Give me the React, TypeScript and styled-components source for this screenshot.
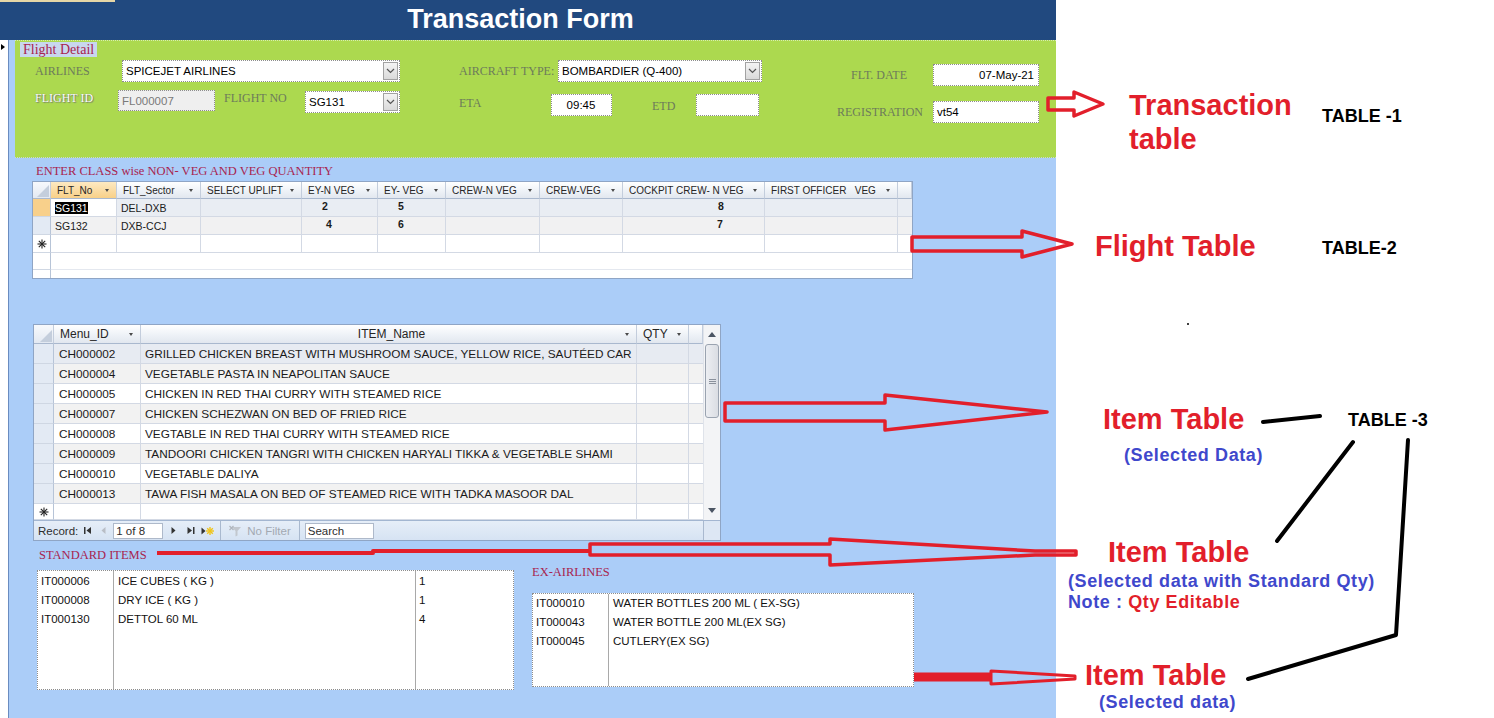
import React from "react";
import styled, { createGlobalStyle } from "styled-components";

const RED = "#e21f2b";
const NOTE_BLUE = "#3f48cc";
const CRIMSON = "#a8244f";
const SANS = `"Liberation Sans", Arial, sans-serif`;
const SERIF = `"Liberation Serif", "Times New Roman", serif`;

const GlobalStyle = createGlobalStyle`
  html, body { margin: 0; padding: 0; background: #fff; }
  body { font-family: ${SANS}; }
  * { box-sizing: border-box; }
`;

const Page = styled.div`
  position: relative;
  width: 1494px;
  height: 718px;
  overflow: hidden;
  display: flex;
  background: #fff;
`;

const FormWindow = styled.div`
  width: 1056px;
  display: flex;
  flex-direction: column;
`;

const TitleBar = styled.div`
  position: relative;
  height: 40px;
  flex-shrink: 0;
  background: #21497f;
  display: flex;
  justify-content: center;
  padding: 6px 15px 0 0;
  color: #fff;
  font: bold 27px/1 ${SANS};
  &::before {
    content: "";
    position: absolute;
    left: 0;
    top: 0;
    width: 115px;
    height: 2px;
    background: #e6d6a6;
  }
`;

const FormBody = styled.div`
  flex: 1;
  display: flex;
`;

const LeftStrip = styled.div`
  width: 9px;
  background: #fff;
  border-right: 1px solid #6a8cc0;
  padding-top: 4px;
`;

const RecordMarker = styled.div`
  width: 0;
  height: 0;
  border-top: 3.5px solid transparent;
  border-bottom: 3.5px solid transparent;
  border-left: 4px solid #000;
  margin-left: 1px;
`;

const Body = styled.div`
  flex: 1;
  background: #abcdf8;
  display: flex;
  flex-direction: column;
`;

/* ---------- green flight detail panel ---------- */

const GreenPanel = styled.div`
  margin-left: 6px;
  height: 118px;
  background: #acd94f;
  border-top: 1px dotted #d8ecb0;
  border-bottom: 1px dotted #c6d9d9;
  display: flex;
  flex-direction: column;
`;

const Legend = styled.div`
  align-self: flex-start;
  margin: 1px 0 0 5px;
  padding: 0 3px;
  background: #c8d7ee;
  color: ${CRIMSON};
  font: 14px/15px ${SERIF};
`;

const FieldsArea = styled.div`
  display: flex;
  margin-top: 3px;
`;

const FieldRows = styled.div`
  display: flex;
  flex-direction: column;
  padding-left: 20px;
`;

const FieldRow = styled.div<{ $mt?: number }>`
  display: flex;
  align-items: flex-start;
  margin-top: ${(p) => p.$mt ?? 0}px;
`;

const FieldLabel = styled.div<{ $w: number; $ml?: number; $mt?: number; $pl?: number; $emboss?: boolean }>`
  width: ${(p) => p.$w}px;
  margin-left: ${(p) => p.$ml ?? 0}px;
  margin-top: ${(p) => p.$mt ?? 0}px;
  padding-left: ${(p) => p.$pl ?? 0}px;
  font: 12px/22px ${SERIF};
  white-space: nowrap;
  color: ${(p) => (p.$emboss ? "#fff" : "#6c7b5b")};
  text-shadow: ${(p) => (p.$emboss ? "0 0 1px #66705a, 1px 1px 1px #7d8a69" : "none")};
`;

const Combo = styled.div<{ $w: number; $mt?: number }>`
  width: ${(p) => p.$w}px;
  height: 22px;
  margin-top: ${(p) => p.$mt ?? 0}px;
  background: #fff;
  border: 1px dotted #8d8d8d;
  display: flex;
  align-items: center;
  padding-left: 3px;
  font: 11.5px ${SANS};
  color: #000;
`;

const DropButton = styled.div`
  margin-left: auto;
  margin-right: 1px;
  width: 15px;
  height: 18px;
  background: linear-gradient(#f4f4f4, #dadada);
  border: 1px solid #a2a2a2;
  display: flex;
  align-items: center;
  justify-content: center;
`;

const TextBox = styled.div<{ $w: number; $mt?: number; $align?: string; $muted?: boolean; $h?: number }>`
  width: ${(p) => p.$w}px;
  height: ${(p) => p.$h ?? 22}px;
  margin-top: ${(p) => p.$mt ?? 0}px;
  background: ${(p) => (p.$muted ? "#efefef" : "#fff")};
  color: ${(p) => (p.$muted ? "#7a7a7a" : "#000")};
  border: 1px dotted #8d8d8d;
  display: flex;
  align-items: center;
  justify-content: ${(p) => p.$align ?? "flex-start"};
  padding: 0 4px 0 3px;
  font: 11.5px ${SANS};
`;

const DateRows = styled.div`
  margin-left: auto;
  margin-right: 17px;
  display: flex;
  flex-direction: column;
`;

/* ---------- datasheets ---------- */

const SectionLabel = styled.div<{ $ml: number; $mt: number }>`
  margin: ${(p) => p.$mt}px 0 0 ${(p) => p.$ml}px;
  color: ${CRIMSON};
  font: 12.5px/16px ${SERIF};
  white-space: nowrap;
`;

const Sheet = styled.div<{ $w: number; $mt: number; $ml: number }>`
  width: ${(p) => p.$w}px;
  margin: ${(p) => p.$mt}px 0 0 ${(p) => p.$ml}px;
  border: 1px solid #8fa5c5;
  background: #fff;
  display: flex;
  flex-direction: column;
`;

const GridRow = styled.div<{ $cols: string; $h: number; $bg?: string }>`
  display: grid;
  grid-template-columns: ${(p) => p.$cols};
  height: ${(p) => p.$h}px;
  flex-shrink: 0;
  background: ${(p) => p.$bg ?? "#fff"};
`;

const HeadCell = styled.div<{ $active?: boolean; $center?: boolean; $size: number }>`
  position: relative;
  display: flex;
  align-items: center;
  justify-content: ${(p) => (p.$center ? "center" : "flex-start")};
  padding-left: 6px;
  font: ${(p) => p.$size}px ${SANS};
  color: #262626;
  white-space: pre;
  background: ${(p) =>
    p.$active ? "linear-gradient(#fde9c2, #f8d088)" : "linear-gradient(#ffffff, #eef2f7 55%, #e2e7ef)"};
  border-right: 1px solid #c3cddc;
  border-bottom: 1px solid #a9b8ce;
`;

const HeadArrow = styled.span`
  position: absolute;
  right: 7px;
  top: 50%;
  margin-top: -1px;
  border-left: 2.5px solid transparent;
  border-right: 2.5px solid transparent;
  border-top: 3px solid #4a4a4a;
`;

const Corner = styled.div`
  background: linear-gradient(#f7f9fc, #e3e9f2);
  border-right: 1px solid #c3cddc;
  border-bottom: 1px solid #a9b8ce;
  display: flex;
  align-items: flex-end;
  justify-content: flex-end;
  padding: 0 1px 1px 0;
`;

const Selector = styled.div<{ $current?: boolean; $blank?: boolean; $line?: boolean }>`
  background: ${(p) => (p.$current ? "#f8d08b" : p.$blank ? "#fff" : "#e3eaf4")};
  border-right: 1px solid #b7c4d7;
  border-bottom: ${(p) => (p.$line === false ? "none" : "1px solid #cfd7e3")};
  display: flex;
  align-items: center;
  justify-content: center;
`;

const Cell = styled.div<{ $pad?: number; $bold?: boolean; $top?: boolean; $bg?: string; $size: number; $open?: boolean }>`
  display: flex;
  align-items: ${(p) => (p.$top ? "flex-start" : "center")};
  padding-left: ${(p) => p.$pad ?? 4}px;
  padding-top: ${(p) => (p.$top ? 1 : 0)}px;
  overflow: hidden;
  white-space: nowrap;
  font: ${(p) => (p.$bold ? "bold " : "")}${(p) => p.$size}px ${SANS};
  color: #1a1a1a;
  background: ${(p) => p.$bg ?? "transparent"};
  border-right: ${(p) => (p.$open ? "none" : "1px solid #d3d9e4")};
  border-bottom: 1px solid #d3d9e4;
`;

const Filler = styled.div<{ $line?: boolean }>`
  border-bottom: ${(p) => (p.$line ? "1px solid #e4e8ef" : "none")};
`;

const Picked = styled.span`
  background: #000;
  color: #fff;
`;

const SheetMain = styled.div`
  display: flex;
`;

const GridArea = styled.div`
  flex: 1;
  display: flex;
  flex-direction: column;
`;

const ScrollBar = styled.div`
  width: 17px;
  display: flex;
  flex-direction: column;
  background: #f3f4f6;
  border-left: 1px solid #dfe3ea;
`;

const ScrollButton = styled.div<{ $end?: boolean }>`
  height: 19px;
  margin-top: ${(p) => (p.$end ? "auto" : "0")};
  display: flex;
  align-items: center;
  justify-content: center;
`;

const ScrollThumb = styled.div`
  height: 74px;
  margin: 0 1px;
  border: 1px solid #9aa3b0;
  border-radius: 3px;
  background: linear-gradient(90deg, #eceef2, #dadde3);
  display: flex;
  align-items: center;
  justify-content: center;
`;

const Grip = styled.div`
  width: 7px;
  height: 5px;
  border-top: 1px solid #8a919c;
  border-bottom: 1px solid #8a919c;
  position: relative;
  &::after {
    content: "";
    position: absolute;
    left: 0;
    right: 0;
    top: 1px;
    border-top: 1px solid #8a919c;
  }
`;

const NavBar = styled.div`
  height: 20px;
  display: flex;
  align-items: center;
  border-top: 1px solid #a3b6d1;
  background: linear-gradient(#e6eef8, #d6e3f3);
  font: 11.5px ${SANS};
  color: #2d2d2d;
`;

const NavText = styled.span<{ $ml?: number; $muted?: boolean }>`
  margin-left: ${(p) => p.$ml ?? 0}px;
  color: ${(p) => (p.$muted ? "#a3a9b2" : "#2d2d2d")};
`;

const NavIcon = styled.svg<{ $ml: number }>`
  margin-left: ${(p) => p.$ml}px;
  flex-shrink: 0;
`;

const NavBox = styled.div<{ $w: number; $ml: number }>`
  width: ${(p) => p.$w}px;
  height: 16px;
  margin-left: ${(p) => p.$ml}px;
  background: #fff;
  border: 1px solid #aeb9ca;
  padding-left: 2px;
  display: flex;
  align-items: center;
`;

const NavSep = styled.div<{ $ml: number }>`
  width: 1px;
  height: 19px;
  margin-left: ${(p) => p.$ml}px;
  background: #a9b9cf;
`;

const NavTail = styled.div`
  margin-left: auto;
  width: 17px;
  height: 100%;
  background: #dde7f4;
  border-left: 1px solid #a9b9cf;
`;

/* ---------- standard / ex-airline list boxes ---------- */

const BottomSection = styled.div`
  display: flex;
  margin-top: 6px;
  padding-left: 28px;
`;

const ListColumn = styled.div<{ $ml?: number }>`
  display: flex;
  flex-direction: column;
  margin-left: ${(p) => p.$ml ?? 0}px;
`;

const ListBox = styled.div<{ $w: number; $h: number; $mt: number }>`
  width: ${(p) => p.$w}px;
  height: ${(p) => p.$h}px;
  margin-top: ${(p) => p.$mt}px;
  background: #fff;
  border: 1px dotted #8d8d8d;
  display: flex;
`;

const ListCol = styled.div<{ $w?: number; $pt: number; $pl: number; $last?: boolean }>`
  width: ${(p) => (p.$w ? `${p.$w}px` : "auto")};
  flex: ${(p) => (p.$w ? "none" : 1)};
  padding: ${(p) => p.$pt}px 0 0 ${(p) => p.$pl}px;
  border-right: ${(p) => (p.$last ? "none" : "1px solid #a9a9a9")};
  font: 11.5px/19px ${SANS};
  color: #111;
  white-space: nowrap;
`;

/* ---------- annotations ---------- */

const Overlay = styled.div`
  position: absolute;
  inset: 0;
  pointer-events: none;
`;

const Marks = styled.svg`
  position: absolute;
  left: 0;
  top: 0;
`;

const Note = styled.div<{ $x: number; $y: number; $size: number; $color: string; $lh?: number; $ls?: number }>`
  position: absolute;
  left: ${(p) => p.$x}px;
  top: ${(p) => p.$y}px;
  font: bold ${(p) => p.$size}px/${(p) => p.$lh ?? p.$size}px ${SANS};
  letter-spacing: ${(p) => p.$ls ?? 0}px;
  color: ${(p) => p.$color};
  white-space: nowrap;
`;

const NoteRed = styled.span`
  color: ${RED};
`;

/* ---------- data ---------- */

const flightCols = "18px 66px 84px 101px 76px 68px 94px 83px 142px 133px 1fr";
const flightHeads = [
  "FLT_No",
  "FLT_Sector",
  "SELECT UPLIFT",
  "EY-N VEG",
  "EY- VEG",
  "CREW-N VEG",
  "CREW-VEG",
  "COCKPIT CREW- N VEG",
  "FIRST OFFICER   VEG",
];
const flights = [
  { no: "SG131", sector: "DEL-DXB", eyn: "2", eynPad: 20, eyv: "5", cockpit: "8", ckPad: 95, bg: "#e9edf3" },
  { no: "SG132", sector: "DXB-CCJ", eyn: "4", eynPad: 24, eyv: "6", cockpit: "7", ckPad: 94, bg: "#f1f1f2" },
];

const itemCols = "20px 87px 496px 52px 1fr";
const items = [
  ["CH000002", "GRILLED CHICKEN BREAST WITH MUSHROOM SAUCE, YELLOW RICE, SAUTÉED CAR"],
  ["CH000004", "VEGETABLE PASTA IN NEAPOLITAN SAUCE"],
  ["CH000005", "CHICKEN IN RED THAI CURRY WITH STEAMED RICE"],
  ["CH000007", "CHICKEN SCHEZWAN ON BED OF FRIED RICE"],
  ["CH000008", "VEGTABLE IN RED THAI CURRY WITH STEAMED RICE"],
  ["CH000009", "TANDOORI CHICKEN TANGRI WITH CHICKEN HARYALI TIKKA & VEGETABLE SHAMI"],
  ["CH000010", "VEGETABLE DALIYA"],
  ["CH000013", "TAWA FISH MASALA ON BED OF  STEAMED RICE WITH TADKA MASOOR DAL"],
];

const standardItems = [
  ["IT000006", "ICE CUBES ( KG )", "1"],
  ["IT000008", "DRY ICE ( KG )", "1"],
  ["IT000130", "DETTOL 60 ML", "4"],
];

const exItems = [
  ["IT000010", "WATER BOTTLES 200 ML ( EX-SG)"],
  ["IT000043", "WATER BOTTLE 200 ML(EX SG)"],
  ["IT000045", "CUTLERY(EX SG)"],
];

/* ---------- small drawings ---------- */

const Chevron = () => (
  <svg width="9" height="6" viewBox="0 0 9 6">
    <path d="M1 1 L4.5 4.5 L8 1" stroke="#555" strokeWidth="1.2" fill="none" />
  </svg>
);

const CornerMark = () => (
  <svg width="12" height="12" viewBox="0 0 12 12">
    <polygon points="12,0 12,12 0,12" fill="#c4cedc" />
  </svg>
);

const NewRowStar = () => (
  <svg width="10" height="10" viewBox="0 0 10 10">
    <g stroke="#222" strokeWidth="1.1">
      <line x1="5" y1="0.5" x2="5" y2="9.5" />
      <line x1="0.5" y1="5" x2="9.5" y2="5" />
      <line x1="1.8" y1="1.8" x2="8.2" y2="8.2" />
      <line x1="8.2" y1="1.8" x2="1.8" y2="8.2" />
    </g>
  </svg>
);

const Combobox = ({ w, text, mt }: { w: number; text: string; mt?: number }) => (
  <Combo $w={w} $mt={mt}>
    {text}
    <DropButton>
      <Chevron />
    </DropButton>
  </Combo>
);

const FlightSheet = () => (
  <Sheet $w={881} $mt={2} $ml={23}>
    <GridRow $cols={flightCols} $h={17}>
      <Corner>
        <CornerMark />
      </Corner>
      {flightHeads.map((h, i) => (
        <HeadCell key={h} $active={i === 0} $size={10}>
          {h}
          <HeadArrow />
        </HeadCell>
      ))}
      <HeadCell $size={10} />
    </GridRow>
    {flights.map((f, i) => (
      <GridRow key={f.no} $cols={flightCols} $h={18} $bg={f.bg}>
        <Selector $current={i === 0} />
        <Cell $size={10.5} $bg={i === 0 ? "#fff" : undefined}>
          {i === 0 ? <Picked>{f.no}</Picked> : f.no}
        </Cell>
        <Cell $size={10.5}>{f.sector}</Cell>
        <Cell $size={10.5} />
        <Cell $size={10.5} $bold $top $pad={f.eynPad}>
          {f.eyn}
        </Cell>
        <Cell $size={10.5} $bold $top $pad={20}>
          {f.eyv}
        </Cell>
        <Cell $size={10.5} />
        <Cell $size={10.5} />
        <Cell $size={10.5} $bold $top $pad={f.ckPad}>
          {f.cockpit}
        </Cell>
        <Cell $size={10.5} />
        <Cell $size={10.5} $open />
      </GridRow>
    ))}
    <GridRow $cols={flightCols} $h={18}>
      <Selector $blank>
        <NewRowStar />
      </Selector>
      {Array.from({ length: 9 }).map((_, i) => (
        <Cell key={i} $size={10.5} />
      ))}
      <Cell $size={10.5} $open />
    </GridRow>
    <GridRow $cols="18px 1fr" $h={17}>
      <Selector $blank />
      <Filler $line />
    </GridRow>
    <GridRow $cols="18px 1fr" $h={8}>
      <Selector $blank $line={false} />
      <Filler />
    </GridRow>
  </Sheet>
);

const ItemSheet = () => (
  <Sheet $w={688} $mt={45} $ml={24}>
    <SheetMain>
      <GridArea>
        <GridRow $cols={itemCols} $h={19}>
          <Corner>
            <CornerMark />
          </Corner>
          <HeadCell $size={12}>
            Menu_ID
            <HeadArrow />
          </HeadCell>
          <HeadCell $size={12} $center>
            ITEM_Name
            <HeadArrow />
          </HeadCell>
          <HeadCell $size={12}>
            QTY
            <HeadArrow />
          </HeadCell>
          <HeadCell $size={12} />
        </GridRow>
        {items.map(([id, name], i) => (
          <GridRow key={id} $cols={itemCols} $h={20} $bg={i === 0 ? "#e7ebf2" : i % 2 ? "#f2f2f2" : "#fff"}>
            <Selector />
            <Cell $size={11.8} $pad={5}>
              {id}
            </Cell>
            <Cell $size={11.8}>{name}</Cell>
            <Cell $size={11.8} />
            <Cell $size={11.8} $open />
          </GridRow>
        ))}
        <GridRow $cols={itemCols} $h={16}>
          <Selector $blank>
            <NewRowStar />
          </Selector>
          <Cell $size={11.8} />
          <Cell $size={11.8} />
          <Cell $size={11.8} />
          <Cell $size={11.8} $open />
        </GridRow>
      </GridArea>
      <ScrollBar>
        <ScrollButton>
          <svg width="8" height="5" viewBox="0 0 8 5">
            <path d="M0 5 L4 0 L8 5Z" fill="#4b5563" />
          </svg>
        </ScrollButton>
        <ScrollThumb>
          <Grip />
        </ScrollThumb>
        <ScrollButton $end>
          <svg width="8" height="5" viewBox="0 0 8 5">
            <path d="M0 0 L4 5 L8 0Z" fill="#4b5563" />
          </svg>
        </ScrollButton>
      </ScrollBar>
    </SheetMain>
    <NavBar>
      <NavText $ml={4}>Record:</NavText>
      <NavIcon $ml={6} width="8" height="9" viewBox="0 0 8 9">
        <rect x="0" y="1" width="1.5" height="7" fill="#333" />
        <path d="M7 1 L2.5 4.5 L7 8Z" fill="#333" />
      </NavIcon>
      <NavIcon $ml={9} width="5" height="9" viewBox="0 0 5 9">
        <path d="M4.5 1 L0.5 4.5 L4.5 8Z" fill="#b9bec6" />
      </NavIcon>
      <NavBox $w={50} $ml={7}>1 of 8</NavBox>
      <NavIcon $ml={8} width="5" height="9" viewBox="0 0 5 9">
        <path d="M0.5 1 L4.5 4.5 L0.5 8Z" fill="#333" />
      </NavIcon>
      <NavIcon $ml={11} width="8" height="9" viewBox="0 0 8 9">
        <path d="M0.5 1 L5 4.5 L0.5 8Z" fill="#333" />
        <rect x="6" y="1" width="1.5" height="7" fill="#333" />
      </NavIcon>
      <NavIcon $ml={6} width="13" height="10" viewBox="0 0 13 10">
        <path d="M0.5 1.5 L4.5 5 L0.5 8.5Z" fill="#333" />
        <g stroke="#f0c419" strokeWidth="1.4">
          <line x1="9" y1="1" x2="9" y2="9" />
          <line x1="5" y1="5" x2="13" y2="5" />
          <line x1="6.2" y1="2.2" x2="11.8" y2="7.8" />
          <line x1="11.8" y1="2.2" x2="6.2" y2="7.8" />
        </g>
      </NavIcon>
      <NavSep $ml={6} />
      <NavIcon $ml={8} width="13" height="12" viewBox="0 0 13 12">
        <path d="M3 2 H12 L8.5 6 V10.5 L6.5 11.5 V6 Z" fill="#c2c7ce" />
        <path d="M0.5 1 L4.5 5 M4.5 1 L0.5 5" stroke="#b0b5bd" strokeWidth="1.2" />
      </NavIcon>
      <NavText $ml={5} $muted>
        No Filter
      </NavText>
      <NavSep $ml={8} />
      <NavBox $w={69} $ml={5}>
        Search
      </NavBox>
      <NavTail />
    </NavBar>
  </Sheet>
);

const App: React.FC = () => {
  return (
    <>
      <GlobalStyle />
      <Page>
        <FormWindow>
          <TitleBar>Transaction Form</TitleBar>
          <FormBody>
            <LeftStrip>
              <RecordMarker />
            </LeftStrip>
            <Body>
              <GreenPanel>
                <Legend>Flight Detail</Legend>
                <FieldsArea>
                  <FieldRows>
                    <FieldRow>
                      <FieldLabel $w={87}>AIRLINES</FieldLabel>
                      <Combobox w={278} text="SPICEJET AIRLINES" />
                      <FieldLabel $w={99} $ml={59}>
                        AIRCRAFT TYPE:
                      </FieldLabel>
                      <Combobox w={204} text="BOMBARDIER (Q-400)" />
                    </FieldRow>
                    <FieldRow $mt={5}>
                      <FieldLabel $w={83} $emboss>
                        FLIGHT ID
                      </FieldLabel>
                      <TextBox $w={97} $h={21} $mt={3} $muted>
                        FL000007
                      </TextBox>
                      <FieldLabel $w={81} $ml={9}>
                        FLIGHT NO
                      </FieldLabel>
                      <Combobox w={95} text="SG131" mt={4} />
                      <FieldLabel $w={92} $ml={59} $mt={5}>
                        ETA
                      </FieldLabel>
                      <TextBox $w={61} $mt={7} $align="center">
                        09:45
                      </TextBox>
                      <FieldLabel $w={44} $ml={40} $mt={8}>
                        ETD
                      </FieldLabel>
                      <TextBox $w={63} $mt={7} />
                    </FieldRow>
                  </FieldRows>
                  <DateRows>
                    <FieldRow $mt={4}>
                      <FieldLabel $w={96} $pl={14}>
                        FLT. DATE
                      </FieldLabel>
                      <TextBox $w={106} $align="flex-end">
                        07-May-21
                      </TextBox>
                    </FieldRow>
                    <FieldRow $mt={15}>
                      <FieldLabel $w={96}>REGISTRATION</FieldLabel>
                      <TextBox $w={106}>vt54</TextBox>
                    </FieldRow>
                  </DateRows>
                </FieldsArea>
              </GreenPanel>

              <SectionLabel $ml={27} $mt={5}>
                ENTER CLASS wise NON- VEG AND VEG QUANTITY
              </SectionLabel>
              <FlightSheet />
              <ItemSheet />

              <BottomSection>
                <ListColumn>
                  <SectionLabel $ml={2} $mt={0}>
                    STANDARD ITEMS
                  </SectionLabel>
                  <ListBox $w={477} $h={120} $mt={7}>
                    <ListCol $w={76} $pt={1} $pl={3}>
                      {standardItems.map((r) => (
                        <div key={r[0]}>{r[0]}</div>
                      ))}
                    </ListCol>
                    <ListCol $w={302} $pt={1} $pl={4}>
                      {standardItems.map((r) => (
                        <div key={r[0]}>{r[1]}</div>
                      ))}
                    </ListCol>
                    <ListCol $pt={1} $pl={3} $last>
                      {standardItems.map((r) => (
                        <div key={r[0]}>{r[2]}</div>
                      ))}
                    </ListCol>
                  </ListBox>
                </ListColumn>
                <ListColumn $ml={18}>
                  <SectionLabel $ml={0} $mt={17}>
                    EX-AIRLINES
                  </SectionLabel>
                  <ListBox $w={382} $h={94} $mt={13}>
                    <ListCol $w={76} $pt={0} $pl={3}>
                      {exItems.map((r) => (
                        <div key={r[0]}>{r[0]}</div>
                      ))}
                    </ListCol>
                    <ListCol $pt={0} $pl={4} $last>
                      {exItems.map((r) => (
                        <div key={r[0]}>{r[1]}</div>
                      ))}
                    </ListCol>
                  </ListBox>
                </ListColumn>
              </BottomSection>
            </Body>
          </FormBody>
        </FormWindow>

        <Overlay>
          <Marks width="1494" height="718" viewBox="0 0 1494 718">
            <g fill="none" stroke={RED} strokeWidth="3.5" strokeLinejoin="round">
              <path d="M1048 98 H1074 V92 L1103 104 L1074 116 V110 H1048 Z" />
              <path d="M912 237 H1022 V231 L1072 244 L1022 257 V251 H912 Z" />
              <path d="M725 403 H885 V395 L1047 412 L885 430 V421 H725 Z" />
              <path d="M157 553 L373 553 L373 551 L590 551" strokeWidth="4" />
              <path d="M590 544 H830 V539 L1035 551 H1076 V555 H1035 L830 565 V555 H590 Z" />
              <path d="M914 677 H992" strokeWidth="9" />
              <path d="M991 671 L1075 676 V679 L991 684 Z" strokeWidth="3" />
            </g>
            <g fill="none" stroke="#000" strokeWidth="4" strokeLinecap="round" strokeLinejoin="round">
              <path d="M1263 422 L1320 416" />
              <path d="M1353 442 L1277 541" />
              <path d="M1408 440 L1396 635 L1248 679" />
            </g>
            <circle cx="1188" cy="324" r="1" fill="#000" />
          </Marks>

          <Note $x={1129} $y={88} $size={29} $lh={34} $color={RED}>
            Transaction
            <br />
            table
          </Note>
          <Note $x={1322} $y={107} $size={18} $color="#000">
            TABLE -1
          </Note>
          <Note $x={1095} $y={232} $size={29} $color={RED}>
            Flight Table
          </Note>
          <Note $x={1322} $y={239} $size={18} $color="#000">
            TABLE-2
          </Note>
          <Note $x={1103} $y={405} $size={29} $color={RED}>
            Item Table
          </Note>
          <Note $x={1348} $y={411} $size={18} $color="#000">
            TABLE -3
          </Note>
          <Note $x={1124} $y={446} $size={18} $ls={0.6} $color={NOTE_BLUE}>
            (Selected Data)
          </Note>
          <Note $x={1108} $y={540} $size={29} $lh={24} $color={RED}>
            Item Table
          </Note>
          <Note $x={1068} $y={573} $size={18} $lh={16} $ls={0.6} $color={NOTE_BLUE}>
            (Selected data with Standard Qty)
          </Note>
          <Note $x={1068} $y={594} $size={18} $lh={16} $ls={0.6} $color={NOTE_BLUE}>
            Note : <NoteRed>Qty Editable</NoteRed>
          </Note>
          <Note $x={1085} $y={663} $size={29} $lh={24} $color={RED}>
            Item Table
          </Note>
          <Note $x={1099} $y={695} $size={18} $lh={14} $ls={0.6} $color={NOTE_BLUE}>
            (Selected data)
          </Note>
        </Overlay>
      </Page>
    </>
  );
};

export default App;
